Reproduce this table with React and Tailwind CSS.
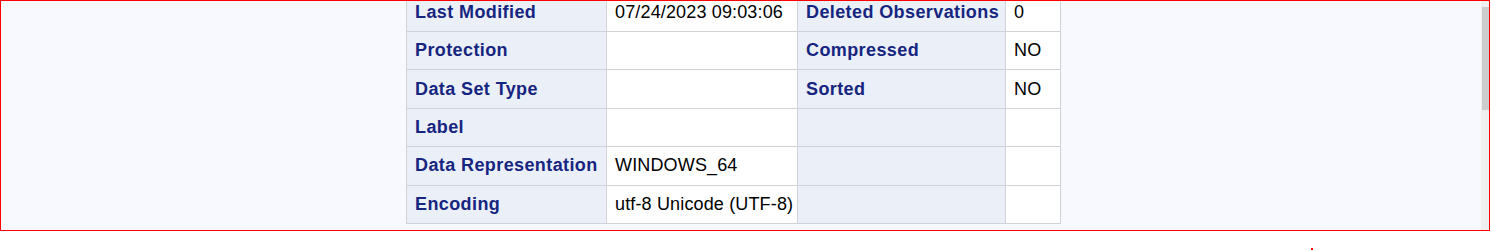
import React from "react";

const rows = [
  ["Last Modified", "07/24/2023 09:03:06", "Deleted Observations", "0"],
  ["Protection", "", "Compressed", "NO"],
  ["Data Set Type", "", "Sorted", "NO"],
  ["Label", "", "", ""],
  ["Data Representation", "WINDOWS_64", "", ""],
  ["Encoding", "utf-8 Unicode (UTF-8)", "", ""],
];

const App = () => {
  return (
    <div className="bg-white w-[1491px] h-[250px] font-['Liberation_Sans',Arial,sans-serif]">
      {/* framed output window */}
      <div className="w-[1490px] h-[231px] border border-[#ff0000] flex overflow-hidden">
        <div className="flex-1 bg-[#f8f9fe] overflow-hidden">
          <div className="ml-[405px] -mt-[8.4px] w-fit grid grid-cols-[199px_190px_207px_54px] auto-rows-[37.4px] gap-px bg-[#d0d2d5] border border-[#d0d2d5] text-[18px] leading-none">
            {rows.map((r, i) => (
              <React.Fragment key={i}>
                <div className="bg-[#ebf0f8] text-[#162580] font-bold tracking-[0.4px] flex items-center pl-2 pb-px whitespace-nowrap">
                  {r[0]}
                </div>
                <div className="bg-white text-black tracking-[0.15px] flex items-center pl-2 pb-px whitespace-nowrap">
                  {r[1]}
                </div>
                <div className="bg-[#ebf0f8] text-[#162580] font-bold tracking-[0.4px] flex items-center pl-2 pb-px whitespace-nowrap">
                  {r[2]}
                </div>
                <div className="bg-white text-black tracking-[0.15px] flex items-center pl-2 pb-px whitespace-nowrap">
                  {r[3]}
                </div>
              </React.Fragment>
            ))}
          </div>
        </div>
        {/* scrollbar */}
        <div className="w-[8px] bg-[#f0f0f0] pt-[6px] pl-px">
          <div className="h-[103px] bg-[#cdcdcd]" />
        </div>
      </div>
      <div className="ml-[1311px] mt-[17px] w-[2px] h-[2px] bg-[#ff0000]" />
    </div>
  );
};

export default App;
